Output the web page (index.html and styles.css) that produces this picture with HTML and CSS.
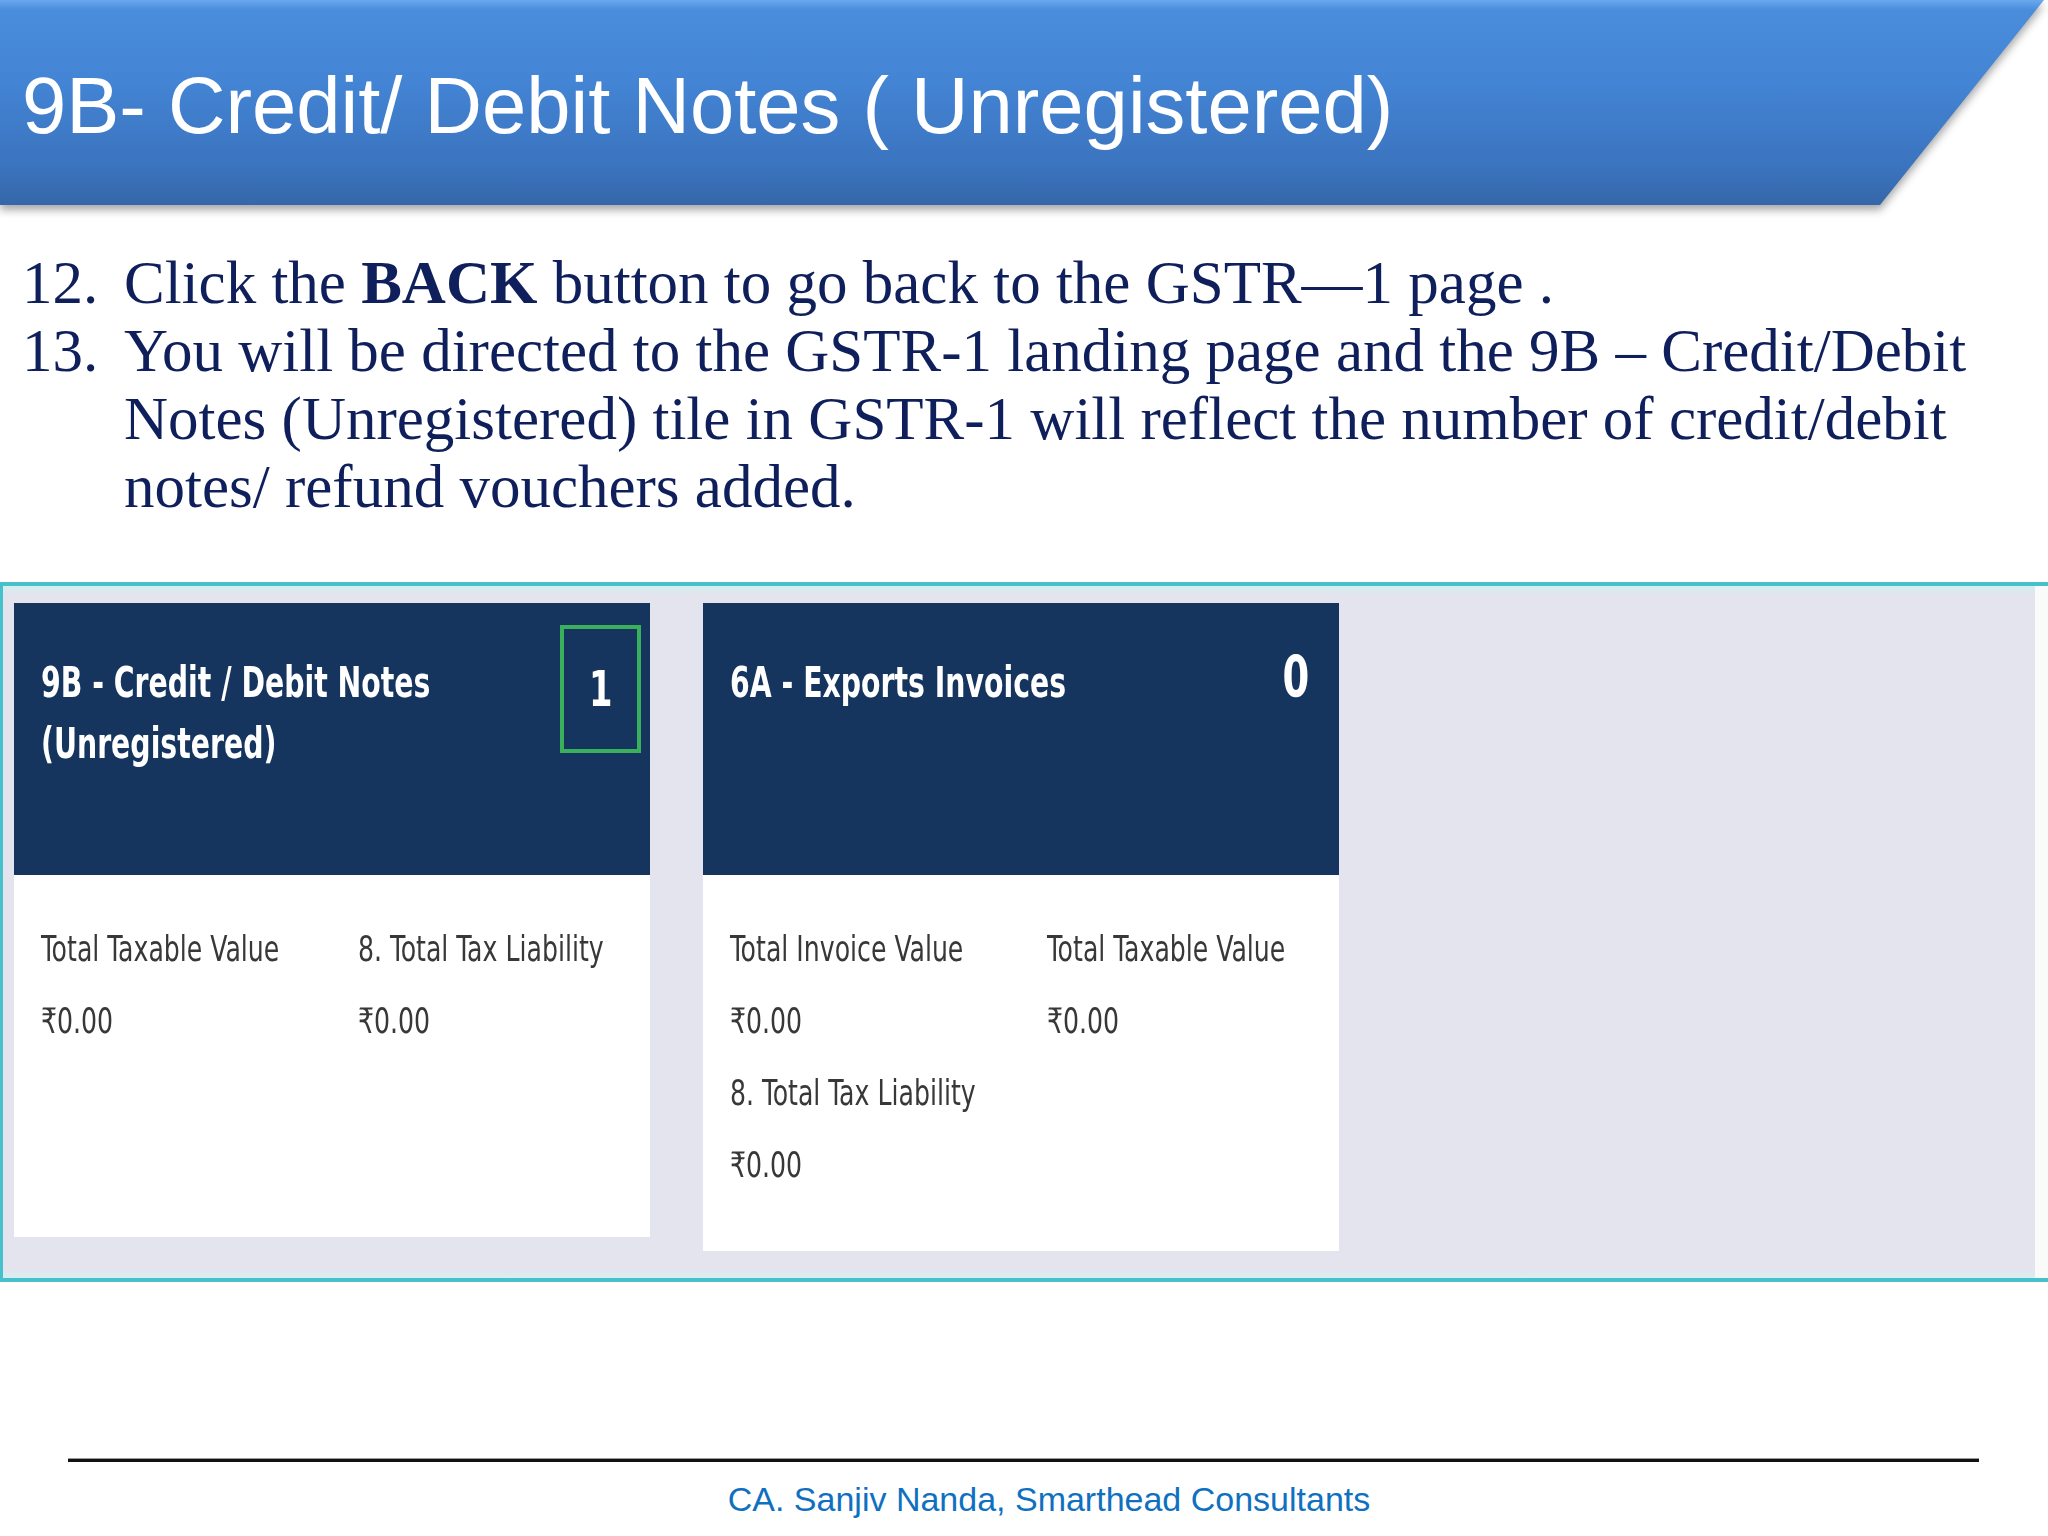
FILE: index.html
```html
<!DOCTYPE html>
<html lang="en">
<head>
<meta charset="utf-8">
<title>9B- Credit/ Debit Notes ( Unregistered)</title>
<link rel="stylesheet" href="styles.css">
</head>
<body>
<div class="slide">
  <div class="header-wrap">
    <header class="header">
      <h1 class="title">9B- Credit/ Debit Notes ( Unregistered)</h1>
    </header>
  </div>

  <ol class="steps">
    <li class="step"><span class="num">12.</span><span class="txt">Click the <b>BACK</b> button to go back to the GSTR—1 page .</span></li>
    <li class="step"><span class="num">13.</span><span class="txt">You will be directed to the GSTR-1 landing page and the 9B – Credit/Debit Notes (Unregistered) tile in GSTR-1 will reflect the number of credit/debit notes/ refund vouchers added.</span></li>
  </ol>

  <section class="panel">
    <div class="tiles">
      <div class="tile tile-short">
        <div class="tile-head">
          <div class="tile-title"><span class="sq">9B - Credit / Debit Notes</span><br><span class="sq">(Unregistered)</span></div>
          <div class="count count-boxed"><span class="sq sq-c">1</span></div>
        </div>
        <div class="tile-body">
          <div class="cell"><span class="sq sq-b">Total Taxable Value</span></div>
          <div class="cell"><span class="sq sq-b">8. Total Tax Liability</span></div>
          <div class="cell"><span class="sq sq-b">₹0.00</span></div>
          <div class="cell"><span class="sq sq-b">₹0.00</span></div>
        </div>
      </div>
      <div class="tile">
        <div class="tile-head">
          <div class="tile-title"><span class="sq">6A - Exports Invoices</span></div>
          <div class="count count-plain"><span class="sq sq-c">0</span></div>
        </div>
        <div class="tile-body">
          <div class="cell"><span class="sq sq-b">Total Invoice Value</span></div>
          <div class="cell"><span class="sq sq-b">Total Taxable Value</span></div>
          <div class="cell"><span class="sq sq-b">₹0.00</span></div>
          <div class="cell"><span class="sq sq-b">₹0.00</span></div>
          <div class="cell"><span class="sq sq-b">8. Total Tax Liability</span></div>
          <div class="cell"></div>
          <div class="cell"><span class="sq sq-b">₹0.00</span></div>
        </div>
      </div>
    </div>
  </section>

  <footer class="footer">
    <div class="rule"></div>
    <div class="credit">CA. Sanjiv Nanda, Smarthead Consultants</div>
  </footer>
</div>
</body>
</html>
```

FILE: styles.css
```css
html, body {
  margin: 0;
  padding: 0;
  background: #ffffff;
}

.slide {
  width: 2048px;
  height: 1536px;
  overflow: hidden;
  background: #ffffff;
}

/* ---------- Header bar ---------- */
.header-wrap {
  height: 205px;
  filter: drop-shadow(0 5px 4px rgba(0, 0, 0, 0.35));
}

.header {
  height: 205px;
  box-sizing: border-box;
  padding: 60px 0 0 22px;
  background: linear-gradient(#6aa8ee 0, #4a8ddc 10px, #4384d4 40%, #3b74bf 80%, #3567aa 100%);
  clip-path: polygon(0 0, 2044px 0, 1880px 205px, 0 205px);
}

.title {
  margin: 0;
  font-family: "Liberation Sans", Arial, sans-serif;
  font-weight: normal;
  font-size: 79.6px;
  line-height: 92px;
  color: #ffffff;
  white-space: nowrap;
}

/* ---------- Steps ---------- */
.steps {
  list-style: none;
  margin: 44px 0 0 0;
  padding: 0;
  width: 1990px;
  font-family: "Liberation Serif", "Times New Roman", serif;
  font-size: 61px;
  line-height: 68px;
  color: #0f1f5c;
}

.step {
  display: flex;
}

.num {
  flex: 0 0 auto;
  width: 102px;
  padding-left: 22px;
}

.txt {
  flex: 1 1 auto;
}

.txt b {
  font-weight: bold;
}

/* ---------- Screenshot panel ---------- */
.panel {
  margin-top: 61px;
  height: 700px;
  box-sizing: border-box;
  border-top: 4px solid #46c1cb;
  border-bottom: 4px solid #46c1cb;
  border-left: 3px solid #46c1cb;
  padding: 17px 0 0 11px;
  background:
    linear-gradient(to right, transparent calc(100% - 13px), #f9fbfb 0),
    linear-gradient(#d3eef1 0, #e3e4ed 9px, #e3e4ed calc(100% - 9px), #d8eef0 100%);
}

.tiles {
  display: flex;
  align-items: flex-start;
  gap: 53px;
}

.tile {
  width: 636px;
  font-family: "DejaVu Sans Condensed", "DejaVu Sans", sans-serif;
  font-stretch: condensed;
}

/* the portal screenshot is horizontally squeezed */
.sq {
  display: inline-block;
  white-space: nowrap;
  transform: scaleX(0.75);
  transform-origin: 0 50%;
}

.sq-b {
  transform: scaleX(0.8);
}

.sq-c {
  transform-origin: 50% 50%;
}

.tile-head {
  height: 272px;
  box-sizing: border-box;
  display: flex;
  justify-content: space-between;
  align-items: flex-start;
  padding: 22px 9px 0 27px;
  background: #15355f;
  color: #ffffff;
}

.tile-title {
  margin-top: 27px;
  font-size: 42px;
  line-height: 61px;
  font-weight: bold;
  white-space: nowrap;
}

.count {
  font-weight: bold;
  color: #ffffff;
}

.count-boxed {
  width: 84px;
  height: 128px;
  box-sizing: border-box;
  border: 4px solid #3bb05c;
  display: flex;
  align-items: center;
  justify-content: center;
  font-size: 50px;
  line-height: 1;
}

.count-plain {
  margin-top: 22px;
  margin-right: 16px;
  font-size: 57px;
  line-height: 61px;
}

.tile-body {
  display: grid;
  grid-template-columns: 317px 1fr;
  grid-auto-rows: 72px;
  box-sizing: border-box;
  padding: 38px 0 50px 27px;
  background: #ffffff;
  font-size: 35px;
  line-height: 72px;
  color: #383838;
}

.tile-short .tile-body {
  min-height: 362px;
}

.cell {
  white-space: nowrap;
}

/* ---------- Footer ---------- */
.footer {
  margin-top: 177px;
}

.rule {
  margin: 0 69px 0 68px;
  height: 3px;
  background: #111111;
  box-shadow: 0 -1px 0 #9a9a9a;
}

.credit {
  margin-top: 17px;
  padding-left: 50px;
  text-align: center;
  font-family: "Liberation Sans", Arial, sans-serif;
  font-size: 34px;
  line-height: 40px;
  color: #1070c0;
}
```
